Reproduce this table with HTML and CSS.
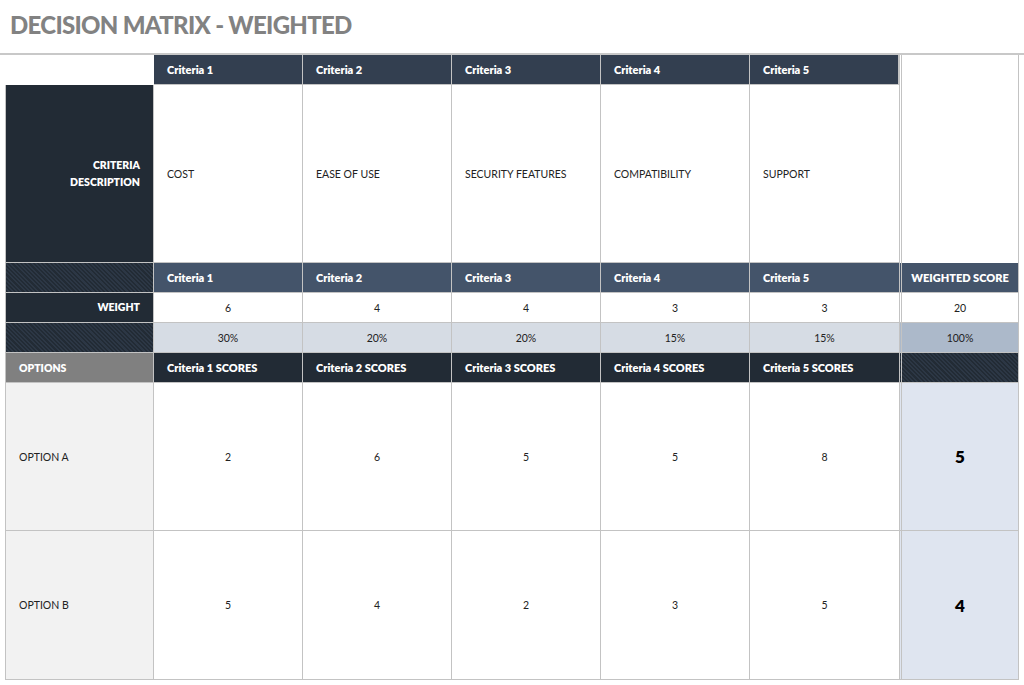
FILE: index.html
```html
<!DOCTYPE html>
<html>
<head>
<meta charset="utf-8">
<link rel="stylesheet" href="styles.css">
</head>
<body>
<h1 class="title">DECISION MATRIX - WEIGHTED</h1>
<div class="rule"></div>
<div class="matrix">
  <div class="cell blank"></div>
  <div class="cell hd1">Criteria 1</div>
  <div class="cell hd1">Criteria 2</div>
  <div class="cell hd1">Criteria 3</div>
  <div class="cell hd1">Criteria 4</div>
  <div class="cell hd1">Criteria 5</div>
  <div class="cell last empty"></div>

  <div class="cell side dark">CRITERIA<br>DESCRIPTION</div>
  <div class="cell desc">COST</div>
  <div class="cell desc">EASE OF USE</div>
  <div class="cell desc">SECURITY FEATURES</div>
  <div class="cell desc">COMPATIBILITY</div>
  <div class="cell desc c5">SUPPORT</div>
  <div class="cell last empty"></div>

  <div class="cell side hatch"></div>
  <div class="cell hd2">Criteria 1</div>
  <div class="cell hd2">Criteria 2</div>
  <div class="cell hd2">Criteria 3</div>
  <div class="cell hd2">Criteria 4</div>
  <div class="cell hd2 c5">Criteria 5</div>
  <div class="cell last hd2 ws">WEIGHTED SCORE</div>

  <div class="cell side dark">WEIGHT</div>
  <div class="cell num">6</div>
  <div class="cell num">4</div>
  <div class="cell num">4</div>
  <div class="cell num">3</div>
  <div class="cell num c5">3</div>
  <div class="cell last num">20</div>

  <div class="cell side hatch"></div>
  <div class="cell num pct">30%</div>
  <div class="cell num pct">20%</div>
  <div class="cell num pct">20%</div>
  <div class="cell num pct">15%</div>
  <div class="cell num pct c5">15%</div>
  <div class="cell last num pct-total">100%</div>

  <div class="cell side opts">OPTIONS</div>
  <div class="cell hd3">Criteria 1 SCORES</div>
  <div class="cell hd3">Criteria 2 SCORES</div>
  <div class="cell hd3">Criteria 3 SCORES</div>
  <div class="cell hd3">Criteria 4 SCORES</div>
  <div class="cell hd3 c5">Criteria 5 SCORES</div>
  <div class="cell last hatch"></div>

  <div class="cell side option">OPTION A</div>
  <div class="cell num">2</div>
  <div class="cell num">6</div>
  <div class="cell num">5</div>
  <div class="cell num">5</div>
  <div class="cell num c5">8</div>
  <div class="cell last score">5</div>

  <div class="cell side option">OPTION B</div>
  <div class="cell num">5</div>
  <div class="cell num">4</div>
  <div class="cell num">2</div>
  <div class="cell num">3</div>
  <div class="cell num c5">5</div>
  <div class="cell last score">4</div>
</div>
</body>
</html>
```

FILE: styles.css
```css
* { box-sizing: border-box; }

body {
  margin: 0;
  background: #ffffff;
  font-family: "Lato", "Liberation Sans", sans-serif;
  color: #222222;
}

.title {
  margin: 0;
  height: 53px;
  padding: 9px 0 0 10px;
  font-size: 24px;
  font-weight: 900;
  color: #828282;
  letter-spacing: -0.7px;
  line-height: 32px;
}

.rule {
  height: 2px;
  background: #c8c8c8;
}

.matrix {
  display: grid;
  margin-left: 5px;
  grid-template-columns: repeat(6, 149px) 120px;
  grid-template-rows: 30px 178px 30px 30px 30px 30px 148px 149px;
}

.cell {
  display: flex;
  align-items: center;
  border-right: 1px solid #c3c3c3;
  border-bottom: 1px solid #c3c3c3;
  font-size: 10.5px;
  padding: 0 13px;
  white-space: nowrap;
}

.c5 { border-right: none; }

.last {
  border-left: 3px double #c3c3c3;
}

.blank {
  border: none;
}

.empty {
  border-bottom: none;
  background: #ffffff;
}

.hd1,
.hd2,
.hd3 {
  color: #ffffff;
  font-weight: 800;
  font-size: 11px;
}

.hd1 { background: #333f50; }
.hd2 { background: #44546a; }
.hd3 { background: #222b35; }

.ws {
  justify-content: center;
  padding: 0;
}

.side {
  border-left: 1px solid #c3c3c3;
}

.dark {
  background: #222b35;
  color: #ffffff;
  font-weight: 800;
  justify-content: flex-end;
  text-align: right;
  line-height: 17px;
}

.hatch {
  background: repeating-linear-gradient(45deg, #222b35 0 1.5px, #2c3745 1.5px 3px);
}

.opts {
  background: #808080;
  color: #ffffff;
  font-weight: 800;
  padding-left: 13px;
}

.option {
  background: #f2f2f2;
  color: #222222;
}

.desc {
  color: #222222;
}

.num {
  justify-content: center;
  padding: 0;
  color: #222222;
}

.pct {
  background: #d6dce4;
}

.pct-total {
  background: #acb9ca;
}

.score {
  justify-content: center;
  padding: 0;
  background: #dfe5f0;
  color: #000000;
  font-weight: 800;
  font-size: 17px;
}
```
